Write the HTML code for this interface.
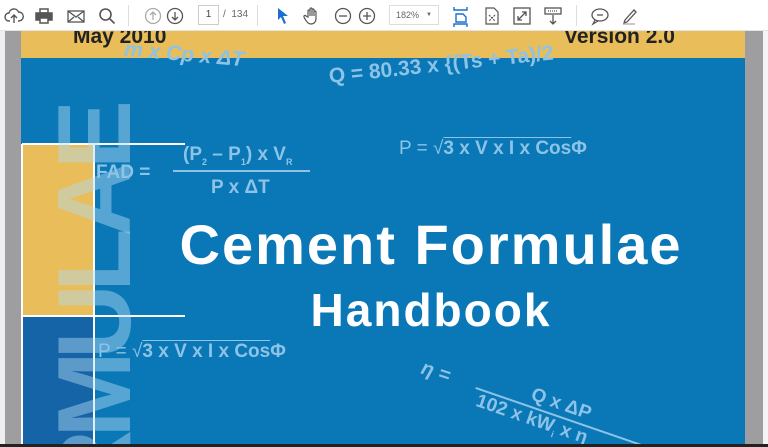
<!DOCTYPE html>
<html style="overflow:hidden"><head><meta charset="utf-8"><style>
*{margin:0;padding:0;box-sizing:border-box}
body{width:768px;height:447px;overflow:hidden;position:relative;background:#f0eef0;font-family:"Liberation Sans",sans-serif}
.a{position:absolute}
.tb{left:0;top:0;width:768px;height:31px;background:#fff;border-bottom:1px solid #e4e4e4}
.ic{position:absolute;top:6px}
.f{color:#8cc3e6;font-weight:bold;white-space:nowrap;position:absolute}
</style></head><body>
<div class="a tb">
<svg class="ic" style="left:4px" width="20" height="20" viewBox="0 0 20 20" fill="none" stroke="#555" stroke-width="1.4"><path d="M6 15H5a4 4 0 0 1 0-8 5 5 0 0 1 9.5-1A4 4 0 0 1 15 15h-1"/><path d="M10 17V9M7 12l3-3 3 3"/></svg>
<svg class="ic" style="left:34px" width="20" height="20" viewBox="0 0 20 20" fill="none" stroke="#555" stroke-width="1.5"><rect x="6" y="3" width="8" height="4"/><rect x="2" y="7" width="16" height="7" fill="#555"/><rect x="6" y="12" width="8" height="5" fill="#fff"/></svg>
<svg class="ic" style="left:66px" width="20" height="20" viewBox="0 0 20 20" fill="none" stroke="#555" stroke-width="1.3"><rect x="2" y="5" width="16" height="11"/><path d="M2 5l8 6 8-6M2 16l6-5M18 16l-6-5"/></svg>
<svg class="ic" style="left:97px" width="20" height="20" viewBox="0 0 20 20" fill="none" stroke="#555" stroke-width="1.6"><circle cx="8.5" cy="8.5" r="5.5"/><path d="M12.5 12.5l5 5"/></svg>
<div class="a" style="left:128px;top:5px;width:1px;height:21px;background:#ddd"></div>
<svg class="ic" style="left:143px" width="20" height="20" viewBox="0 0 20 20" fill="none" stroke="#aaa" stroke-width="1.3"><circle cx="10" cy="10" r="7.5"/><path d="M10 14V6M7 9l3-3 3 3"/></svg>
<svg class="ic" style="left:165px" width="20" height="20" viewBox="0 0 20 20" fill="none" stroke="#555" stroke-width="1.3"><circle cx="10" cy="10" r="7.5"/><path d="M10 6v8M7 11l3 3 3-3"/></svg>
<div class="a" style="left:198px;top:5px;width:21px;height:20px;border:1px solid #ccc;font-size:10px;color:#444;text-align:center;line-height:18px">1</div>
<div class="a" style="left:223px;top:9px;font-size:10px;color:#666">/&nbsp; 134</div>
<div class="a" style="left:257px;top:5px;width:1px;height:21px;background:#ddd"></div>
<svg class="ic" style="left:273px" width="20" height="20" viewBox="0 0 20 20"><path d="M5 2l10 8h-5l3 7-2 1-3-7-3 3z" fill="#1a6fd0"/></svg>
<svg class="ic" style="left:302px" width="20" height="20" viewBox="0 0 20 20" fill="none" stroke="#555" stroke-width="1.2"><path d="M6 11V5a1 1 0 0 1 2 0v5V3a1 1 0 0 1 2 0v7V4a1 1 0 0 1 2 0v6V6a1 1 0 0 1 2 0v6c0 4-2 6-5 6s-4-2-6-5l-1-2a1 1 0 0 1 2-1z"/></svg>
<svg class="ic" style="left:333px" width="20" height="20" viewBox="0 0 20 20" fill="none" stroke="#555" stroke-width="1.3"><circle cx="10" cy="10" r="7.5"/><path d="M6 10h8"/></svg>
<svg class="ic" style="left:357px" width="20" height="20" viewBox="0 0 20 20" fill="none" stroke="#555" stroke-width="1.3"><circle cx="10" cy="10" r="7.5"/><path d="M6 10h8M10 6v8"/></svg>
<div class="a" style="left:389px;top:5px;width:50px;height:20px;border:1px solid #ddd;font-size:9px;color:#666;line-height:18px;padding-left:6px">182%<span style="position:absolute;right:6px;top:0;font-size:6px">▼</span></div>
<svg class="ic" style="left:451px" width="20" height="22" viewBox="0 0 20 22" fill="none" stroke="#1a6fd0" stroke-width="1.4"><path d="M3 1v3h13V1M3 21v-3h13v3M5 8h7l3 3v5H5z"/></svg>
<svg class="ic" style="left:484px" width="16" height="20" viewBox="0 0 16 20" fill="none" stroke="#555" stroke-width="1.2"><path d="M2 2h8l4 4v12H2z"/><path d="M5 9l6 6M11 9l-6 6" stroke-dasharray="2 1"/></svg>
<svg class="ic" style="left:512px" width="20" height="20" viewBox="0 0 20 20" fill="none" stroke="#555" stroke-width="1.3"><rect x="2" y="2" width="16" height="16"/><path d="M6 14l8-8M10 6h4v4M6 10v4h4"/></svg>
<svg class="ic" style="left:543px" width="20" height="20" viewBox="0 0 20 20" fill="none" stroke="#555" stroke-width="1.3"><rect x="2" y="2" width="16" height="6"/><path d="M5 5h10" stroke-dasharray="1 1"/><path d="M10 9v9M7 15l3 3 3-3"/></svg>
<div class="a" style="left:576px;top:5px;width:1px;height:21px;background:#ddd"></div>
<svg class="ic" style="left:590px" width="20" height="20" viewBox="0 0 20 20" fill="none" stroke="#555" stroke-width="1.3"><ellipse cx="10" cy="9" rx="8" ry="6"/><path d="M5 14l-2 4 5-3"/><path d="M7 9h6"/></svg>
<svg class="ic" style="left:620px" width="20" height="20" viewBox="0 0 20 20" fill="none" stroke="#555" stroke-width="1.3"><path d="M5 14l9-10 2 2-9 10-3 1z"/><path d="M3 18h12" stroke="#aaa"/></svg>
</div>
<div class="a" style="left:5px;top:31px;width:16px;height:416px;background:#9e9d9f"></div>
<div class="a" style="left:745px;top:31px;width:18px;height:416px;background:#9e9d9f"></div>
<div class="a" style="left:763px;top:31px;width:5px;height:416px;background:#f4f4f4"></div>
<div class="a" style="left:21px;top:31px;width:724px;height:413px;background:#0a78b6;overflow:hidden">
 <div class="a" style="left:1px;top:113px;width:71px;height:172px;background:#e8bd5a"></div>
 <div class="a" style="left:1px;top:285px;width:71px;height:140px;background:#1564a8"></div>
 <div class="a" style="left:1px;top:112px;width:163px;height:2px;background:#fff"></div>
 <div class="a" style="left:1px;top:284px;width:163px;height:2px;background:#fff"></div>
 <div class="a" style="left:72px;top:113px;width:2px;height:310px;background:#fff"></div>
 <div class="a" style="left:0px;top:113px;width:2px;height:310px;background:#fff"></div>
 <div class="a" style="left:22px;top:677px;width:600px;text-align:right;font-weight:bold;font-size:104px;color:rgba(180,220,245,0.45);transform:rotate(-90deg);transform-origin:0 0;white-space:nowrap;letter-spacing:-8px;line-height:1">FORMULAE</div>
 <div class="a" style="left:0;top:0;width:724px;height:27px;background:#e8bd5a;font-weight:bold;color:#222;font-size:21px;line-height:12px">
  <span class="a" style="left:52px;top:0">May 2010</span><span class="a" style="left:543px;top:0">Version 2.0</span></div>
 <div class="f" style="left:103px;top:12px;font-size:21px;transform:rotate(5deg);font-style:italic">m x Cp x ΔT</div>
 <div class="f" style="left:308px;top:34px;font-size:21px;transform:rotate(-6deg);transform-origin:0 50%">Q = 80.33 x {(Ts + Ta)/2</div>
 <div class="f" style="left:378px;top:107px;font-size:19px;font-weight:normal">P = √<span style="text-decoration:overline;font-weight:bold">3 x V x I x Cos</span><b>Φ</b></div>
 <div class="f" style="left:75px;top:131px;font-size:19px">FAD =</div>
 <div class="f" style="left:162px;top:113px;font-size:19px">(P<sub style="font-size:9px">2</sub> – P<sub style="font-size:9px">1</sub>) x V<sub style="font-size:9px">R</sub></div>
 <div class="a" style="left:152px;top:139px;width:137px;height:2px;background:#8cc3e6"></div>
 <div class="f" style="left:190px;top:146px;font-size:19px">P x ΔT</div>
 <div class="f" style="left:77px;top:310px;font-size:19px;font-weight:normal">P = √<span style="text-decoration:overline;font-weight:bold">3 x V x I x Cos</span><b>Φ</b></div>
 <div class="a" style="left:100px;top:182px;width:620px;text-align:center;color:#fff;font-weight:bold;font-size:56px;letter-spacing:2px;line-height:64px;white-space:nowrap">Cement Formulae</div>
 <div class="a" style="left:200px;top:253px;width:420px;text-align:center;color:#fff;font-weight:bold;font-size:46px;letter-spacing:2px;line-height:52px">Handbook</div>
 <div class="f" style="left:400px;top:330px;font-size:20px;font-style:italic;transform:rotate(18deg)">η =</div>
 <div class="a" style="left:455px;top:356px;transform:rotate(19deg);transform-origin:0 0;width:175px">
  <div class="f" style="left:55px;top:-22px;font-size:19px">Q x ΔP</div>
  <div class="a" style="left:0;top:0;width:175px;height:2px;background:#8cc3e6"></div>
  <div class="f" style="left:5px;top:2px;font-size:19px">102 x kW<sub style="font-size:9px">i</sub> x η</div>
 </div>
</div>
<div class="a" style="left:0;top:444px;width:768px;height:3px;background:#222"></div>
</body></html>
